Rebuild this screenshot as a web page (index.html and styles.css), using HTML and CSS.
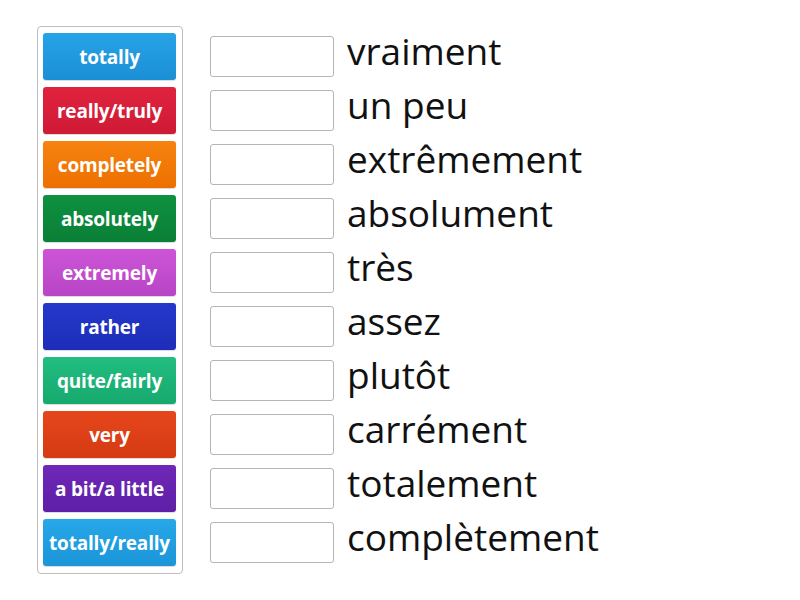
FILE: index.html
```html
<!DOCTYPE html>
<html>
<head>
<meta charset="utf-8">
<link rel="stylesheet" href="styles.css">
</head>
<body>
<div class="page">
  <div class="bank">
    <div class="tile c1">totally</div>
    <div class="tile c2">really/truly</div>
    <div class="tile c3">completely</div>
    <div class="tile c4">absolutely</div>
    <div class="tile c5">extremely</div>
    <div class="tile c6">rather</div>
    <div class="tile c7">quite/fairly</div>
    <div class="tile c8">very</div>
    <div class="tile c9">a bit/a little</div>
    <div class="tile c10">totally/really</div>
  </div>
  <div class="rows">
    <div class="row"><div class="slot"></div><div class="word">vraiment</div></div>
    <div class="row"><div class="slot"></div><div class="word">un peu</div></div>
    <div class="row"><div class="slot"></div><div class="word">extrêmement</div></div>
    <div class="row"><div class="slot"></div><div class="word">absolument</div></div>
    <div class="row"><div class="slot"></div><div class="word">très</div></div>
    <div class="row"><div class="slot"></div><div class="word">assez</div></div>
    <div class="row"><div class="slot"></div><div class="word">plutôt</div></div>
    <div class="row"><div class="slot"></div><div class="word">carrément</div></div>
    <div class="row"><div class="slot"></div><div class="word">totalement</div></div>
    <div class="row"><div class="slot"></div><div class="word">complètement</div></div>
  </div>
</div>
</body>
</html>
```
FILE: styles.css
```css
html, body {
  margin: 0;
  padding: 0;
  background: #fff;
  font-family: "Open Sans", "Liberation Sans", sans-serif;
}
.page {
  display: flex;
  align-items: flex-start;
  padding: 26px 0 0 37px;
}
.bank {
  display: flex;
  flex-direction: column;
  gap: 7px;
  padding: 6px 6px 7px 5px;
  border: 1px solid #bdbdbd;
  border-radius: 4px;
  width: 133px;
}
.tile {
  height: 47px;
  border-radius: 3px;
  color: #fff;
  font-weight: 700;
  font-size: 19px;
  letter-spacing: -0.2px;
  display: flex;
  align-items: center;
  justify-content: center;
  white-space: nowrap;
  box-shadow: 0 1px 1px rgba(0,0,0,0.15);
}
.c1 { background: linear-gradient(#27a3e6, #1b8fd6); }
.c2 { background: linear-gradient(#e0233f, #cf1a35); }
.c3 { background: linear-gradient(#f7820f, #ec7000); }
.c4 { background: linear-gradient(#0e9140, #0a7f36); }
.c5 { background: linear-gradient(#cc55d6, #b845c6); }
.c6 { background: linear-gradient(#2438cc, #1d2db8); }
.c7 { background: linear-gradient(#22bd80, #17a96e); }
.c8 { background: linear-gradient(#e6461c, #d53a12); }
.c9 { background: linear-gradient(#6f28b8, #5e1fa6); }
.c10 { background: linear-gradient(#27a8e8, #1b95d8); }
.rows {
  display: flex;
  flex-direction: column;
  margin-left: 27px;
  padding-top: 10px;
}
.row {
  display: flex;
  align-items: flex-start;
  height: 54px;
}
.slot {
  width: 122px;
  height: 39px;
  border: 1px solid #b5b5b5;
  border-radius: 3px;
  flex: none;
}
.word {
  margin-left: 13px;
  font-size: 37px;
  color: #111;
  line-height: 1;
  margin-top: -4px;
}
```
